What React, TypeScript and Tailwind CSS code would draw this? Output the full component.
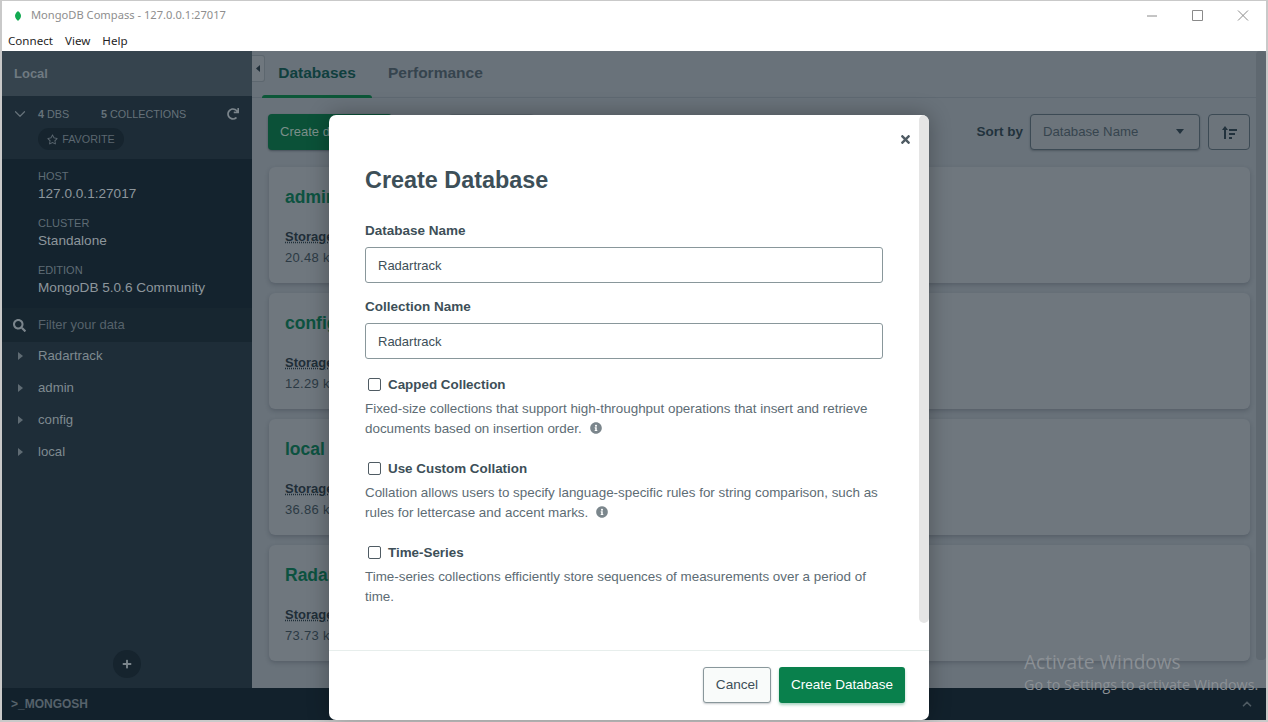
import { ChevronDown, ChevronUp } from "lucide-react";
import { FaInfoCircle, FaPlus, FaRedo, FaRegStar, FaSearch, FaTimes } from "react-icons/fa";

const databases = [
  { name: "admin", size: "20.48 kB" },
  { name: "config", size: "12.29 kB" },
  { name: "local", size: "36.86 kB" },
  { name: "Radartrack", size: "73.73 kB" },
];

function Caret({ className }: { className?: string }) {
  return (
    <svg width="5" height="8" viewBox="0 0 5 8" className={className}>
      <path d="M0 0l5 4-5 4z" fill="currentColor" />
    </svg>
  );
}

function Meta({ label, value }: { label: string; value: string }) {
  return (
    <div className="h-[47px]">
      <div className="text-[11px] leading-[14px] text-[#5f6c75]">{label}</div>
      <div className="text-[13.6px] leading-[18px] text-[#8d969c] mt-[2px]">{value}</div>
    </div>
  );
}

function Sidebar() {
  return (
    <div className="w-[250px] shrink-0 flex flex-col bg-[#1e2d38]">
      <div className="h-[45px] shrink-0 bg-[#36444e] flex items-center pl-[12px] text-[13px] font-bold text-[#6f7a81]">Local</div>
      <div className="h-[63px] shrink-0 bg-[#1d2c37]">
        <div className="flex items-center h-[36px] -mb-[4px] text-[10.8px] text-[#66727a]">
          <ChevronDown className="w-[18px] h-[18px] ml-[9px] text-[#66727a]" strokeWidth={1.6} />
          <span className="ml-[9px] w-[63px]"><b>4</b> DBS</span>
          <span><b>5</b> COLLECTIONS</span>
          <FaRedo className="w-[12px] h-[12px] ml-auto mr-[13px] text-[#7b858c]" />
        </div>
        <div className="ml-[36px] w-[86px] h-[22px] rounded-full bg-[#16242e] flex items-center justify-center gap-[4px] text-[10.8px] text-[#5b6770]">
          <FaRegStar className="w-[11px] h-[11px]" />
          FAVORITE
        </div>
      </div>
      <div className="h-[149px] shrink-0 bg-[#14232e] pl-[36px] pt-[10px]">
        <Meta label="HOST" value="127.0.0.1:27017" />
        <Meta label="CLUSTER" value="Standalone" />
        <Meta label="EDITION" value="MongoDB 5.0.6 Community" />
      </div>
      <div className="h-[34px] shrink-0 bg-[#172630] flex items-center text-[13px] text-[#56626b]">
        <FaSearch className="w-[13px] h-[13px] ml-[11px] mr-[12px] text-[#7b858c]" />
        Filter your data
      </div>
      <div className="flex-1 relative">
        <div className="-mt-[2px]">
          {["Radartrack", "admin", "config", "local"].map((n) => (
            <div key={n} className="h-[32px] flex items-center text-[13.2px] text-[#7f8a90]">
              <Caret className="ml-[16px] mr-[15px] text-[#5f6b73]" />
              {n}
            </div>
          ))}
        </div>
        <button className="absolute left-[111px] bottom-[10px] w-[28px] h-[28px] rounded-full bg-[#16242e] flex items-center justify-center text-[#7b858c]">
          <FaPlus className="w-[10px] h-[10px]" />
        </button>
      </div>
    </div>
  );
}

function DbCard({ name, size }: { name: string; size: string }) {
  return (
    <div className="h-[116px] shrink-0 rounded-[6px] bg-[#6f777e] shadow-[0_2px_4px_rgba(30,40,50,0.25)] pl-[16px] pt-[18px]">
      <div className="text-[17.5px] leading-[24px] font-bold text-[#0c5240]">{name}</div>
      <div className="mt-[20px] text-[13px] leading-[16px] font-bold text-[#1f2e38] underline decoration-dotted">Storage size</div>
      <div className="mt-[5px] text-[13px] leading-[16px] text-[#2c3a44] tracking-[0.3px]">{size}</div>
    </div>
  );
}

function Main() {
  return (
    <div className="flex-1 min-w-0 flex bg-[#69727a]">
      <div className="flex-1 min-w-0 flex flex-col relative">
        <button className="absolute left-0 top-[4px] w-[13px] h-[27px] rounded-r-[3px] border border-l-0 border-[#5d676f] bg-[#6f777e] flex items-center justify-center text-[#1f2e38]">
          <svg width="4" height="7" viewBox="0 0 4 7"><path d="M4 0L0 3.5 4 7z" fill="currentColor" /></svg>
        </button>
        <div className="h-[47px] shrink-0 border-b border-[#5f6972] flex items-stretch pl-[10px] text-[15.5px] font-bold">
          <div className="w-[110px] flex flex-col items-center text-[#103f3e] -mb-px">
            <div className="flex-1 flex items-center">Databases</div>
            <div className="w-full h-[3px] rounded-t-[3px] bg-[#0c5738]" />
          </div>
          <div className="ml-[16px] flex items-center pb-[3px] text-[#36444e]">Performance</div>
        </div>
        <div className="h-[69px] shrink-0 flex items-start pt-[16px] pl-[16px] pr-[6px]">
          <button className="w-[124px] h-[36px] rounded-[4px] bg-[#0b5138] text-left pl-[12px] text-[13px] text-[#7b8f8a] shadow-[0_1px_2px_rgba(20,30,40,0.4)]">Create database</button>
          <button className="ml-[56px] w-[87px] h-[36px] rounded-[4px] border border-[#5b656d] bg-[#6f777e]" />
          <span className="ml-auto mr-[7px] h-[36px] flex items-center text-[13.5px] font-bold text-[#22323d]">Sort by</span>
          <div className="w-[170px] h-[36px] rounded-[4px] border border-[#3c4a54] bg-[#6c747b] flex items-center pl-[12px] pr-[14px] text-[13.2px] text-[#36444e] shadow-[0_1px_2px_rgba(20,30,40,0.3)]">
            Database Name
            <svg width="10" height="6" viewBox="0 0 10 6" className="ml-auto text-[#22323d]"><path d="M1 0h8L5 5z" fill="currentColor" /></svg>
          </div>
          <button className="ml-[8px] w-[42px] h-[36px] rounded-[4px] border border-[#3c4a54] bg-[#6c747b] flex items-center justify-center text-[#22323d]">
            <svg width="15" height="13" viewBox="0 0 15 13" fill="currentColor">
              <path d="M3 0l3 4H4v9H2V4H0zM7 3h8v2H7zM7 7h6v2H7zM7 11h3v2H7z" />
            </svg>
          </button>
        </div>
        <div className="flex flex-col gap-[10px] pl-[17px] pr-[6px]">
          {databases.map((d) => (
            <DbCard key={d.name} name={d.name} size={d.size} />
          ))}
        </div>
      </div>
      <div className="w-[10px] shrink-0 bg-[#5f6870] rounded-[4px] mb-[28px]" />
    </div>
  );
}

function Check({ label, children }: { label: string; children: React.ReactNode }) {
  return (
    <div className="h-[84px]">
      <label className="flex items-center h-[20px]">
        <span className="w-[13px] h-[13px] ml-[3px] -mt-[2px] rounded-[2px] border-[1.5px] border-[#4f5b63] bg-white" />
        <span className="ml-[7px] text-[13.4px] font-bold text-[#3d4f58]">{label}</span>
      </label>
      <p className="mt-[4px] text-[13.4px] leading-[20px] text-[#5d6c74]">{children}</p>
    </div>
  );
}

function Field({ label, value }: { label: string; value: string }) {
  return (
    <div className="h-[76px]">
      <div className="pt-px text-[13.5px] leading-[19px] font-bold text-[#3d4f58]">{label}</div>
      <div className="mt-[7px] h-[36px] w-[518px] rounded-[3px] border border-[#89979b] px-[12px] pt-px flex items-center text-[13px] text-[#3d4f58]">{value}</div>
    </div>
  );
}

function Modal() {
  return (
    <div className="absolute left-[327px] top-[114px] w-[600px] h-[605px] rounded-[7px] bg-white flex flex-col overflow-hidden shadow-[0_0_22px_rgba(0,0,0,0.3)]">
      <div className="absolute right-0 top-0 w-[10px] h-[508px] rounded-[5px] bg-[#e5e5e5]" />
      <FaTimes className="absolute left-[571px] top-[18px] w-[11px] h-[13px] text-[#4f5b63]" />
      <div className="h-[535px] shrink-0 pl-[36px] pt-[50px]">
        <h2 className="text-[23.4px] leading-[30px] font-bold text-[#3d4f58]">Create Database</h2>
        <div className="mt-[25px]">
          <Field label="Database Name" value="Radartrack" />
          <Field label="Collection Name" value="Radartrack" />
        </div>
        <div className="w-[518px] mt-[3px]">
          <Check label="Capped Collection">
            Fixed-size collections that support high-throughput operations that insert and retrieve documents based on insertion order.
            <FaInfoCircle className="inline-block w-[12px] h-[12px] ml-[8px] -mt-[2px] text-[#7b868c]" />
          </Check>
          <Check label="Use Custom Collation">
            Collation allows users to specify language-specific rules for string comparison, such as rules for lettercase and accent marks.
            <FaInfoCircle className="inline-block w-[12px] h-[12px] ml-[8px] -mt-[2px] text-[#7b868c]" />
          </Check>
          <Check label="Time-Series">
            Time-series collections efficiently store sequences of measurements over a period of time.
          </Check>
        </div>
      </div>
      <div className="flex-1 border-t border-[#e7eeec] flex items-start justify-end gap-[8px] pt-[16px] pr-[24px]">
        <button className="w-[68px] h-[36px] rounded-[3px] border border-[#89979b] bg-[#f9fbfa] text-[13.6px] text-[#3d4f58] shadow-[0_1px_2px_rgba(60,70,80,0.3)]">Cancel</button>
        <button className="w-[126px] h-[36px] rounded-[3px] bg-[#09804c] text-[13.5px] font-medium text-white shadow-[0_2px_3px_rgba(9,128,76,0.35)]">Create Database</button>
      </div>
    </div>
  );
}

export default function App() {
  return (
    <div className="relative w-[1268px] h-[722px] overflow-hidden bg-[#c9c9c9] font-['Liberation_Sans',Arial,sans-serif]">
      <div className="absolute inset-x-[2px] top-[1px] bottom-[2px] flex flex-col">
        <div className="h-[50px] shrink-0 bg-white relative font-['Noto_Sans',sans-serif]">
          <div className="flex items-center h-[29px] pl-[12px] text-[11.15px] text-[#8e8e8e]">
            <svg width="8" height="10" viewBox="0 0 8 10" className="mr-[9px]"><path d="M4 0c2 2 3 3 3 5s-2 4-3 5c-1-1-3-3-3-5s1-3 3-5z" fill="#13aa52" /></svg>
            <span>MongoDB Compass - 127.0.0.1:27017</span>
          </div>
          <div className="flex items-center gap-[12px] pl-[6px] pt-[3px] text-[11.6px] leading-[16px] text-[#1f1f1f]">
            <span>Connect</span>
            <span>View</span>
            <span>Help</span>
          </div>
          <svg width="104" height="12" viewBox="0 0 104 12" fill="none" stroke="#8a8a8a" className="absolute left-[1145px] top-[9px]">
            <path d="M0 6h10" />
            <path d="M45.5 0.5h10v10h-10z" />
            <path d="M91 0.5l10 10M101 0.5l-10 10" />
          </svg>
        </div>
        <div className="flex-1 min-h-0 flex">
          <Sidebar />
          <Main />
        </div>
        <div className="h-[32px] shrink-0 bg-[#12212c] flex items-center justify-between pl-[9px] pr-[12px] text-[12px] font-bold text-[#56626b]">
          <span>&gt;_MONGOSH</span>
          <ChevronUp className="w-[14px] h-[14px] text-[#4e5a62]" strokeWidth={3} />
        </div>
        <Modal />
      </div>
      <div className="absolute left-[1024px] top-[650px] text-[#8b9095] font-['Open_Sans',sans-serif] pointer-events-none">
        <div className="text-[19.1px] leading-[24px]">Activate Windows</div>
        <div className="text-[14.3px] leading-[20px] mt-px whitespace-nowrap">Go to Settings to activate Windows.</div>
      </div>
    </div>
  );
}
